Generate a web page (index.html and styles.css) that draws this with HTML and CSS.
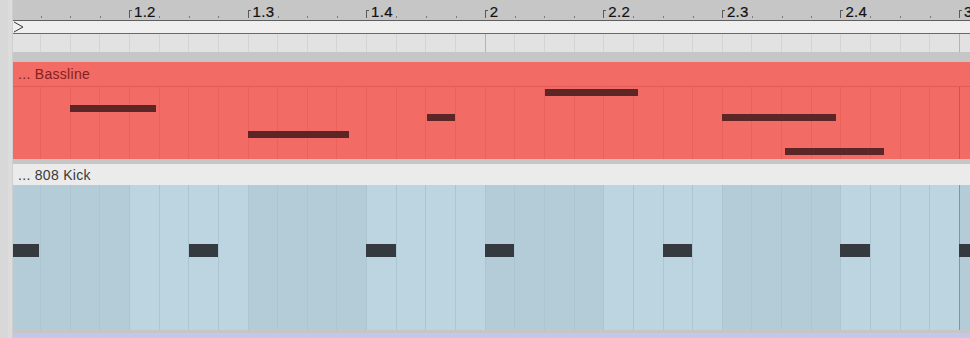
FILE: index.html
```html
<!DOCTYPE html>
<html>
<head>
<meta charset="utf-8">
<link rel="stylesheet" href="styles.css">
</head>
<body>
<div class="app">
  <div class="side"></div>
  <div class="main">
    <div class="ruler">
      <div class="mark" style="left:116px"><span>1.2</span></div>
      <div class="mark" style="left:234.6px"><span>1.3</span></div>
      <div class="mark" style="left:353.1px"><span>1.4</span></div>
      <div class="mark" style="left:471.7px"><span>2</span></div>
      <div class="mark" style="left:590.3px"><span>2.2</span></div>
      <div class="mark" style="left:708.9px"><span>2.3</span></div>
      <div class="mark" style="left:827.4px"><span>2.4</span></div>
      <div class="mark" style="left:946px"><span>3</span></div>
    </div>
    <div class="loopbar">
      <svg class="play" width="12" height="12" viewBox="0 0 12 12"><polyline points="1,1 10,6 1,11" fill="none" stroke="#3a3a3a" stroke-width="1"/></svg>
    </div>
    <div class="beatstrip">
      <div class="barline" style="left:471.7px"></div>
      <div class="barline" style="left:946px"></div>
    </div>
    <div class="gap g10"></div>
    <section class="clip bass">
      <header class="clip-head">... Bassline</header>
      <div class="clip-body">
        <div class="note" style="left:57px;top:18px;width:86px"></div>
        <div class="note" style="left:235px;top:44px;width:101px"></div>
        <div class="note" style="left:414px;top:27px;width:28px"></div>
        <div class="note" style="left:532px;top:2px;width:93px"></div>
        <div class="note" style="left:709px;top:27px;width:114px"></div>
        <div class="note" style="left:772px;top:61px;width:99px"></div>
        <div class="endline" style="left:946px"></div>
      </div>
    </section>
    <div class="gap g5"></div>
    <section class="clip kick">
      <header class="clip-head">... 808 Kick</header>
      <div class="clip-body">
        <div class="hit" style="left:0px;width:26px"></div>
        <div class="hit" style="left:176px;width:29px"></div>
        <div class="hit" style="left:353px;width:30px"></div>
        <div class="hit" style="left:472px;width:29px"></div>
        <div class="hit" style="left:650px;width:29px"></div>
        <div class="hit" style="left:827px;width:30px"></div>
        <div class="hit" style="left:946px;width:12px"></div>
        <div class="endline" style="left:946px"></div>
      </div>
    </section>
    <div class="gap g3"></div>
    <div class="nextlane"></div>
  </div>
</div>
</body>
</html>
```

FILE: styles.css
```css
* { box-sizing: border-box; }
html, body {
  margin: 0;
  padding: 0;
  width: 970px;
  height: 338px;
  overflow: hidden;
  background: #c6c6c6;
  font-family: "Liberation Sans", Arial, sans-serif;
}
.app {
  display: flex;
  width: 970px;
  height: 338px;
}
.side {
  width: 13px;
  flex: none;
  background: #d8d8d8;
  border-right: 1px solid #cfcfcf;
  box-shadow: inset -4px 0 0 #dcdcdc;
}
.main {
  flex: 1;
  display: flex;
  flex-direction: column;
  min-width: 0;
}
.ruler {
  position: relative;
  height: 20px;
  flex: none;
  background-color: #c6c6c6;
  background-image: repeating-linear-gradient(90deg, #7c7c7c -2.07px -1.07px, transparent -1.07px 27.57px);
  background-size: 100% 2px;
  background-position: 0 16px;
  background-repeat: no-repeat;
}
.mark {
  position: absolute;
  top: 10px;
  width: 3px;
  height: 8px;
  border-left: 1px solid #5a5a5a;
  border-top: 1px solid #5a5a5a;
  background: #c6c6c6;
}
.mark span {
  position: absolute;
  left: 4px;
  top: -8px;
  font-size: 15px;
  letter-spacing: 0.3px;
  color: #111;
  white-space: nowrap;
  -webkit-text-stroke: 0.2px #111;
}
.loopbar {
  height: 14px;
  flex: none;
  background: #efefef;
  border-top: 1px solid #5e5e5e;
  border-bottom: 1px solid #6a6a6a;
  display: flex;
  align-items: center;
}
.play { display: block; margin-left: 0; }
.beatstrip {
  position: relative;
  height: 18px;
  flex: none;
  background-color: #e2e2e2;
  background-image: repeating-linear-gradient(90deg, #d4d4d4 -2.57px -1.57px, transparent -1.57px 27.07px);
}
.barline {
  position: absolute;
  top: 0;
  bottom: 0;
  width: 1px;
  background: #b4b4b4;
}
.gap { flex: none; background: #c6c6c6; }
.g10 { height: 10px; }
.g5 { height: 5px; }
.g3 { height: 3px; }
.clip { flex: none; display: flex; flex-direction: column; }
.clip-head {
  font-size: 14px;
  letter-spacing: 0.3px;
  padding-left: 5px;
  display: flex;
  align-items: center;
}
.clip-body { position: relative; }
.bass .clip-head {
  height: 25px;
  background: #f26b64;
  color: #84201e;
  border-bottom: 1px solid #e35b55;
}
.bass .clip-body {
  height: 72px;
  background-color: #f26b64;
  background-image: repeating-linear-gradient(90deg, #eb625c -2.57px -1.57px, transparent -1.57px 27.07px);
}
.note {
  position: absolute;
  height: 7px;
  background: #5c2626;
}
.kick .clip-head {
  height: 21px;
  background: #ebebeb;
  color: #3a3a3a;
}
.kick .clip-body {
  height: 145px;
  background-color: #bad3df;
  background-image:
    repeating-linear-gradient(90deg, #acc5d1 -2.57px -1.57px, transparent -1.57px 27.07px),
    repeating-linear-gradient(90deg, #b3ccd8 -2.57px 116px, #bcd5e1 116px 234.57px);
}
.hit {
  position: absolute;
  top: 59px;
  height: 13px;
  background: #343a40;
}
.endline {
  position: absolute;
  top: 0;
  bottom: 0;
  width: 1px;
  background: rgba(40, 60, 75, 0.35);
}
.bass .endline { background: rgba(120, 20, 20, 0.2); }
.nextlane {
  flex: 1;
  background: #c3c8ea;
}
```
